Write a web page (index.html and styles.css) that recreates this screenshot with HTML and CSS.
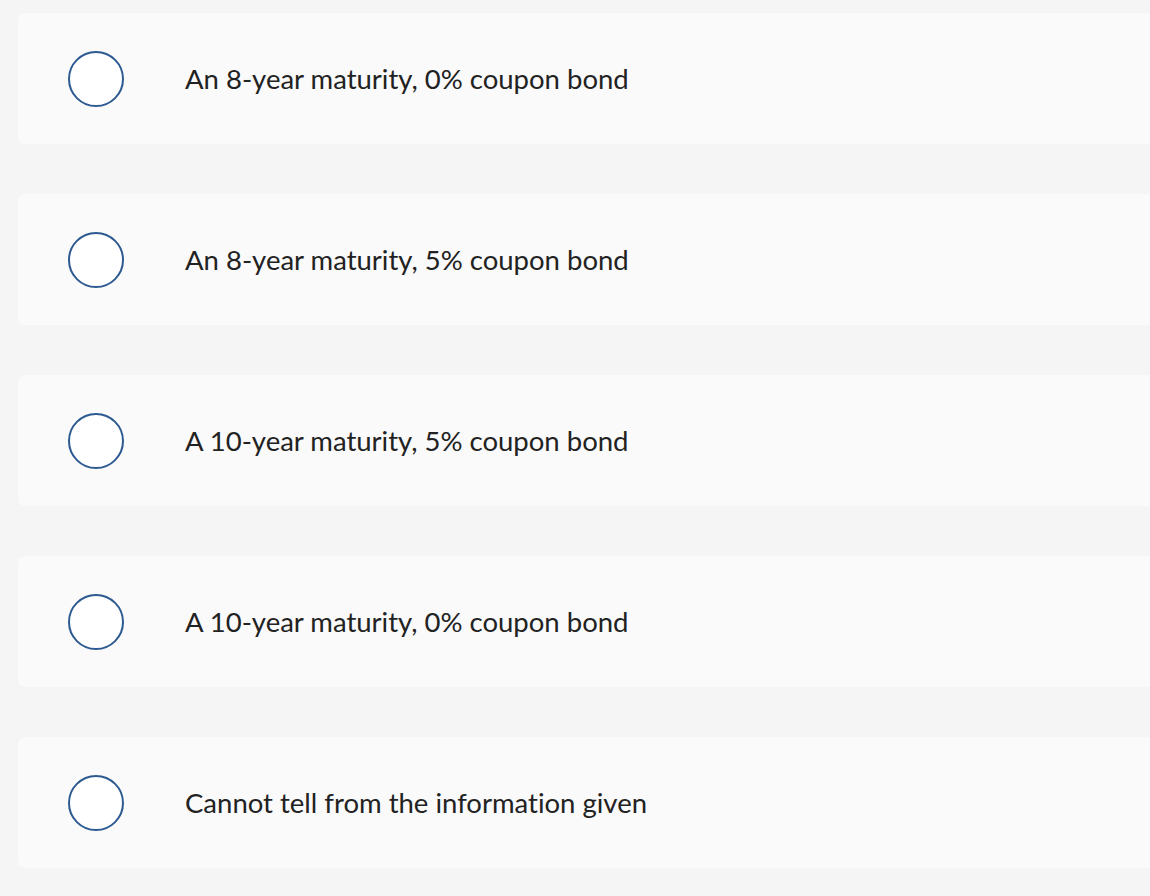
FILE: index.html
```html
<!DOCTYPE html>
<html lang="en">
<head>
<meta charset="utf-8">
<title>Options</title>
<link rel="stylesheet" href="styles.css">
</head>
<body>
<div class="list">
  <label class="option"><span class="radio"></span><span class="label">An 8-year maturity, 0% coupon bond</span></label>
  <label class="option"><span class="radio"></span><span class="label">An 8-year maturity, 5% coupon bond</span></label>
  <label class="option"><span class="radio"></span><span class="label">A 10-year maturity, 5% coupon bond</span></label>
  <label class="option"><span class="radio"></span><span class="label">A 10-year maturity, 0% coupon bond</span></label>
  <label class="option"><span class="radio"></span><span class="label">Cannot tell from the information given</span></label>
</div>
</body>
</html>
```
FILE: styles.css
```css
html, body {
  margin: 0;
  padding: 0;
  background: #f5f5f5;
  overflow: hidden;
}
body {
  width: 1150px;
  height: 896px;
  font-family: "Lato", "Liberation Sans", sans-serif;
  color: #222;
}
.list {
  display: flex;
  flex-direction: column;
  gap: 50px;
  padding: 13px 0 0 18px;
  margin-right: -30px;
}
.option {
  display: flex;
  align-items: center;
  height: 131px;
  padding-left: 50px;
  background: #fafafa;
  border-radius: 7px;
  box-sizing: border-box;
}
.radio {
  flex: none;
  width: 56px;
  height: 56px;
  box-sizing: border-box;
  border: 2px solid #2d5a90;
  border-radius: 50%;
  background: #fff;
}
.label {
  margin-left: 61px;
  font-size: 27.5px;
  line-height: 1;
  margin-top: 0;
  font-variant-ligatures: none;
}
```
